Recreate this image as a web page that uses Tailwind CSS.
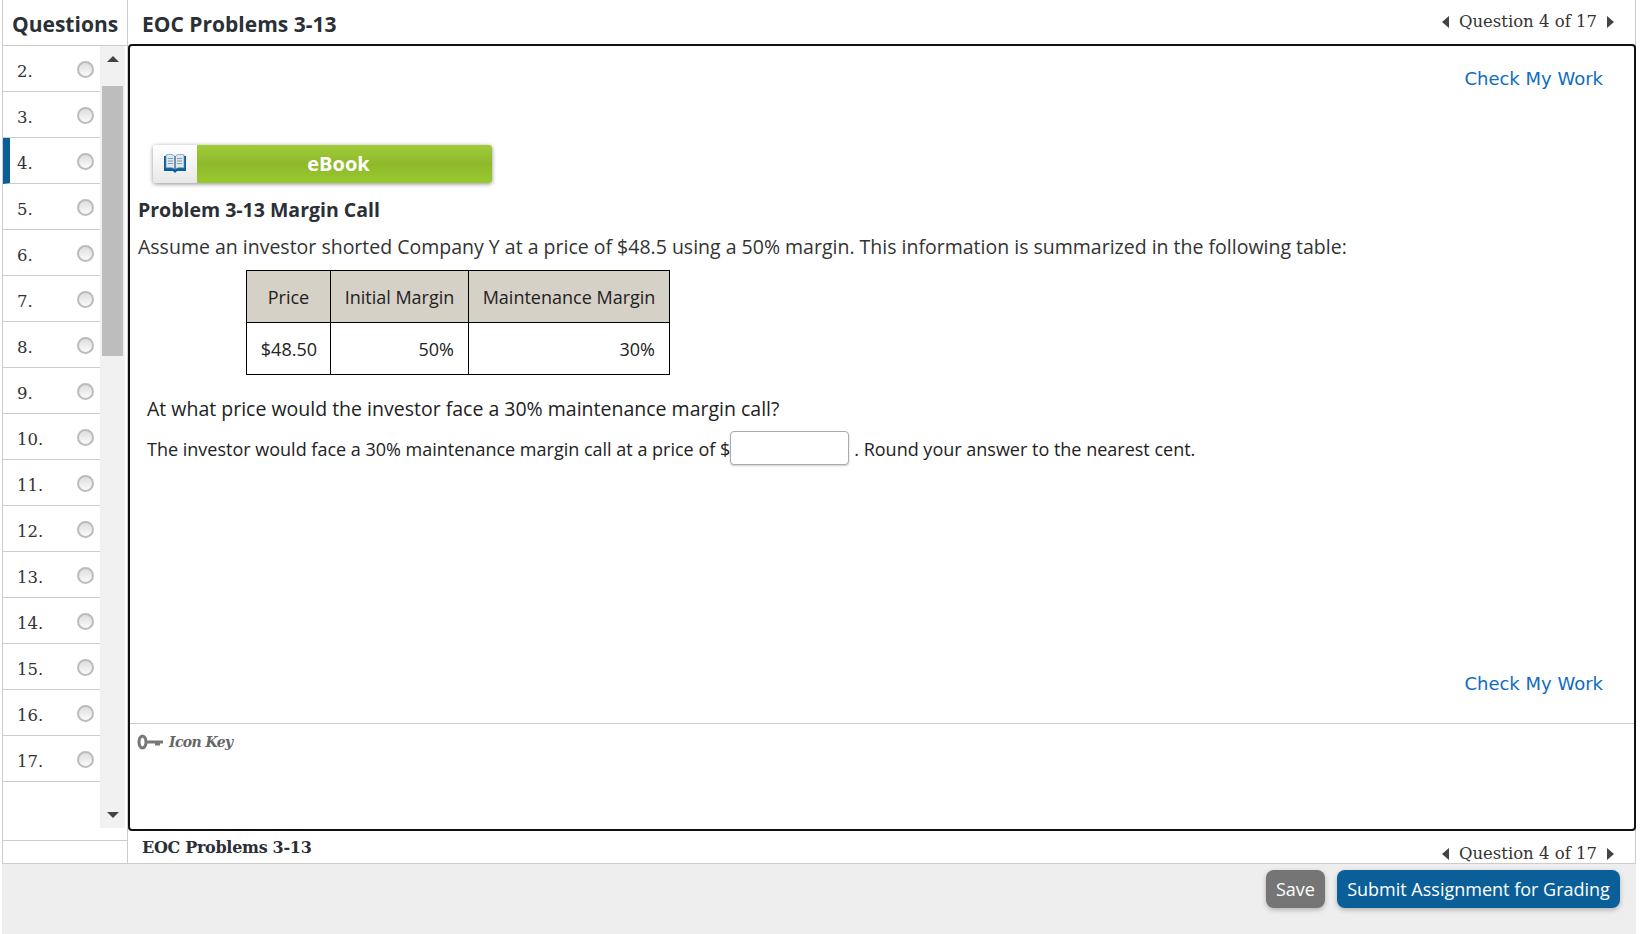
<!DOCTYPE html>
<html><head><meta charset="utf-8"><script src="https://cdn.jsdelivr.net/npm/@tailwindcss/browser@4"></script></head>
<body class="bg-white overflow-hidden">
<div class="relative w-[1645px] h-[934px] font-['Open_Sans',sans-serif] text-[#222]">
 <div class="ml-[2px] w-[1634px] h-[864px] flex border-l border-r border-b border-[#ccc]">
  <div class="w-[125px] shrink-0 border-r border-[#ccc] flex flex-col">
   <div class="h-[46px] shrink-0 border-b border-[#ccc] pl-[9px] pt-[8px] text-[21px] leading-[32px] font-bold text-[#2b2f36]">Questions</div>
   <div class="h-[794px] shrink-0 flex font-['DejaVu_Serif',serif] text-[16.5px] text-[#333]">
    <div class="w-[97px] shrink-0">
     <div class="h-[46px] border-b border-[#ccc] flex items-center justify-between pl-[14px] pr-[6px]"><span class="mt-[7px]">2.</span><div class="mt-[2px] w-[17px] h-[17px] rounded-full border-2 border-[#bcbcbc] bg-linear-to-b from-[#dedede] to-[#fafafa]"></div></div>
     <div class="h-[46px] border-b border-[#ccc] flex items-center justify-between pl-[14px] pr-[6px]"><span class="mt-[7px]">3.</span><div class="mt-[2px] w-[17px] h-[17px] rounded-full border-2 border-[#bcbcbc] bg-linear-to-b from-[#dedede] to-[#fafafa]"></div></div>
     <div class="h-[46px] border-b border-[#ccc] border-l-[7px] border-l-[#0b5f99] flex items-center justify-between pl-[7px] pr-[6px]"><span class="mt-[7px]">4.</span><div class="mt-[2px] w-[17px] h-[17px] rounded-full border-2 border-[#bcbcbc] bg-linear-to-b from-[#dedede] to-[#fafafa]"></div></div>
     <div class="h-[46px] border-b border-[#ccc] flex items-center justify-between pl-[14px] pr-[6px]"><span class="mt-[7px]">5.</span><div class="mt-[2px] w-[17px] h-[17px] rounded-full border-2 border-[#bcbcbc] bg-linear-to-b from-[#dedede] to-[#fafafa]"></div></div>
     <div class="h-[46px] border-b border-[#ccc] flex items-center justify-between pl-[14px] pr-[6px]"><span class="mt-[7px]">6.</span><div class="mt-[2px] w-[17px] h-[17px] rounded-full border-2 border-[#bcbcbc] bg-linear-to-b from-[#dedede] to-[#fafafa]"></div></div>
     <div class="h-[46px] border-b border-[#ccc] flex items-center justify-between pl-[14px] pr-[6px]"><span class="mt-[7px]">7.</span><div class="mt-[2px] w-[17px] h-[17px] rounded-full border-2 border-[#bcbcbc] bg-linear-to-b from-[#dedede] to-[#fafafa]"></div></div>
     <div class="h-[46px] border-b border-[#ccc] flex items-center justify-between pl-[14px] pr-[6px]"><span class="mt-[7px]">8.</span><div class="mt-[2px] w-[17px] h-[17px] rounded-full border-2 border-[#bcbcbc] bg-linear-to-b from-[#dedede] to-[#fafafa]"></div></div>
     <div class="h-[46px] border-b border-[#ccc] flex items-center justify-between pl-[14px] pr-[6px]"><span class="mt-[7px]">9.</span><div class="mt-[2px] w-[17px] h-[17px] rounded-full border-2 border-[#bcbcbc] bg-linear-to-b from-[#dedede] to-[#fafafa]"></div></div>
     <div class="h-[46px] border-b border-[#ccc] flex items-center justify-between pl-[14px] pr-[6px]"><span class="mt-[7px]">10.</span><div class="mt-[2px] w-[17px] h-[17px] rounded-full border-2 border-[#bcbcbc] bg-linear-to-b from-[#dedede] to-[#fafafa]"></div></div>
     <div class="h-[46px] border-b border-[#ccc] flex items-center justify-between pl-[14px] pr-[6px]"><span class="mt-[7px]">11.</span><div class="mt-[2px] w-[17px] h-[17px] rounded-full border-2 border-[#bcbcbc] bg-linear-to-b from-[#dedede] to-[#fafafa]"></div></div>
     <div class="h-[46px] border-b border-[#ccc] flex items-center justify-between pl-[14px] pr-[6px]"><span class="mt-[7px]">12.</span><div class="mt-[2px] w-[17px] h-[17px] rounded-full border-2 border-[#bcbcbc] bg-linear-to-b from-[#dedede] to-[#fafafa]"></div></div>
     <div class="h-[46px] border-b border-[#ccc] flex items-center justify-between pl-[14px] pr-[6px]"><span class="mt-[7px]">13.</span><div class="mt-[2px] w-[17px] h-[17px] rounded-full border-2 border-[#bcbcbc] bg-linear-to-b from-[#dedede] to-[#fafafa]"></div></div>
     <div class="h-[46px] border-b border-[#ccc] flex items-center justify-between pl-[14px] pr-[6px]"><span class="mt-[7px]">14.</span><div class="mt-[2px] w-[17px] h-[17px] rounded-full border-2 border-[#bcbcbc] bg-linear-to-b from-[#dedede] to-[#fafafa]"></div></div>
     <div class="h-[46px] border-b border-[#ccc] flex items-center justify-between pl-[14px] pr-[6px]"><span class="mt-[7px]">15.</span><div class="mt-[2px] w-[17px] h-[17px] rounded-full border-2 border-[#bcbcbc] bg-linear-to-b from-[#dedede] to-[#fafafa]"></div></div>
     <div class="h-[46px] border-b border-[#ccc] flex items-center justify-between pl-[14px] pr-[6px]"><span class="mt-[7px]">16.</span><div class="mt-[2px] w-[17px] h-[17px] rounded-full border-2 border-[#bcbcbc] bg-linear-to-b from-[#dedede] to-[#fafafa]"></div></div>
     <div class="h-[46px] border-b border-[#ccc] flex items-center justify-between pl-[14px] pr-[6px]"><span class="mt-[7px]">17.</span><div class="mt-[2px] w-[17px] h-[17px] rounded-full border-2 border-[#bcbcbc] bg-linear-to-b from-[#dedede] to-[#fafafa]"></div></div>
    </div>
    <div class="w-[25px] h-[782px] bg-[#f1f1f1] flex flex-col items-center">
     <div class="h-[40px] shrink-0 w-full flex items-center justify-center pb-[14px]"><div class="w-0 h-0 border-x-[6px] border-x-transparent border-b-[6px] border-b-[#444]"></div></div>
     <div class="w-[21px] h-[270px] bg-[#bdbdbd]"></div>
     <div class="flex-1"></div>
     <div class="h-[27px] w-full flex items-center justify-center"><div class="w-0 h-0 border-x-[6px] border-x-transparent border-t-[6px] border-t-[#444]"></div></div>
    </div>
   </div>
   <div class="flex-1 border-t border-[#ccc]"></div>
  </div>
  <div class="flex-1 min-w-0 flex flex-col">
   <div class="h-[44px] shrink-0 flex justify-between pl-[14px]">
    <div class="pt-[8px] text-[21px] leading-[32px] font-bold text-[#2b2f36]">EOC Problems 3-13</div>
    <div class="flex items-center gap-[10px] pr-[21px] font-['DejaVu_Serif',serif] text-[16.5px] text-[#333]"><div class="w-0 h-0 border-y-[6px] border-y-transparent border-r-[7px] border-r-[#444]"></div><span>Question 4 of 17</span><div class="w-0 h-0 border-y-[6px] border-y-transparent border-l-[7px] border-l-[#444]"></div></div>
   </div>
   <div class="h-[787px] shrink-0 -mr-px border-2 border-[#111] rounded-[4px] flex flex-col">
    <div class="h-[677px] shrink-0 px-[8px] relative">
     <div class="flex justify-end pr-[23px] pt-[19px] h-[99px]"><a class="font-['DejaVu_Sans',sans-serif] text-[#0f6cbf] text-[18px] leading-[28px]">Check My Work</a></div>
     <div class="ml-[15px] w-[339px] h-[38px] flex rounded-[3px] shadow-[0_1px_4px_rgba(0,0,0,0.45)]">
      <div class="w-[44px] flex items-center justify-center bg-linear-to-b from-white to-[#e8e8e8] rounded-l-[3px]">
       <svg width="26" height="22" viewBox="0 0 26 22"><path d="M2 3h22v15H15l-2 2-2-2H2z" fill="#0b5f99"/><path d="M4 2c3-1 7-1 8.500 1v13C11 14.500 7 14.500 4 15zM22 2c-3-1-7-1-8.500 1v13c1.500-1.500 5.500-1.500 8.500-1z" fill="#dfe8ee" stroke="#5d8fb0" stroke-width="0.700"/><path d="M6 5.500h5M6 8h5M6 10.500h5M15 5.500h5M15 8h5M15 10.500h5" stroke="#8a9aa5" stroke-width="1"/></svg>
      </div>
      <div class="flex-1 flex items-center justify-center pr-[12px] bg-linear-to-b from-[#a1cc38] via-[#8fb92c] to-[#98c92e] rounded-r-[3px] text-white font-bold text-[20px]">eBook</div>
     </div>
     <div class="mt-[11px] text-[19.5px] leading-[32px] font-bold text-[#2b2f36]">Problem 3-13 Margin Call</div>
     <div class="mt-[5px] text-[19.5px] leading-[32px] text-[#333]">Assume an investor shorted Company Y at a price of $48.5 using a 50% margin. This information is summarized in the following table:</div>
     <table class="ml-[108px] mt-[7px] border-collapse table-fixed w-[423px] text-[18px] text-[#222]">
      <thead><tr class="h-[52px] bg-[#d6d1c7]"><th class="w-[84px] border border-black font-normal pt-[2px]">Price</th><th class="w-[138px] border border-black font-normal pt-[2px]">Initial Margin</th><th class="w-[201px] border border-black font-normal pt-[2px]">Maintenance Margin</th></tr></thead>
      <tbody><tr class="h-[52px]"><td class="border border-black px-[13px] pt-[2px] text-right">$48.50</td><td class="border border-black px-[14px] pt-[2px] text-right">50%</td><td class="border border-black px-[14px] pt-[2px] text-right">30%</td></tr></tbody>
     </table>
     <div class="ml-[9px] mt-[18px] text-[19.5px] leading-[32px] text-[#222]">At what price would the investor face a 30% maintenance margin call?</div>
     <div class="ml-[9px] mt-[6px] flex items-center text-[18px] text-[#222] h-[34px]"><span class="mt-[3px]">The investor would face a 30% maintenance margin call at a price of $</span><div class="w-[119px] h-[34px] bg-white border border-[#aaa] rounded-[4px] shadow-[0_1px_2px_rgba(0,0,0,0.2)]"></div><span class="ml-[5px] mt-[3px]">. Round your answer to the nearest cent.</span></div>
     <div class="absolute right-[31px] top-[624px] font-['DejaVu_Sans',sans-serif] text-[#0f6cbf] text-[18px] leading-[28px]">Check My Work</div>
    </div>
    <div class="flex-1 border-t border-[#ccc] pl-[7px] pt-[6px] flex items-start gap-[5px]">
     <svg class="mt-[3px]" width="27" height="18" viewBox="0 0 27 18"><ellipse cx="5.500" cy="9" rx="3.500" ry="6" fill="none" stroke="#777" stroke-width="3"/><path d="M9 7.500h17v3h-3v2h-5v-2H9z" fill="#777"/></svg>
     <span class="font-['DejaVu_Serif',serif] italic font-bold text-[14px] tracking-[-0.6px] leading-[24px] text-[#666]">Icon Key</span>
    </div>
   </div>
   <div class="flex-1 flex justify-between pl-[14px] font-['DejaVu_Serif',serif] text-[#333]">
    <div class="text-[#2b2f36] font-bold text-[16px] tracking-[-0.3px] leading-[34px]">EOC Problems 3-13</div>
    <div class="flex items-center gap-[10px] pr-[21px] pt-[11px] text-[16.5px]"><div class="w-0 h-0 border-y-[6px] border-y-transparent border-r-[7px] border-r-[#444]"></div><span>Question 4 of 17</span><div class="w-0 h-0 border-y-[6px] border-y-transparent border-l-[7px] border-l-[#444]"></div></div>
   </div>
  </div>
 </div>
 <div class="ml-[2px] w-[1634px] h-[70px] bg-[#eeeeee] flex justify-end items-start gap-[12px] pt-[6px] pr-[16px] text-white text-[18px]">
  <div class="w-[59px] h-[38px] rounded-[8px] bg-[#757575] flex items-center justify-center shadow-[0_2px_5px_rgba(0,0,0,0.25)]">Save</div>
  <div class="w-[283px] h-[38px] rounded-[8px] bg-[#0b5f99] flex items-center justify-center shadow-[0_2px_5px_rgba(0,0,0,0.25)]">Submit Assignment for Grading</div>
 </div>
</div>
</body></html>
